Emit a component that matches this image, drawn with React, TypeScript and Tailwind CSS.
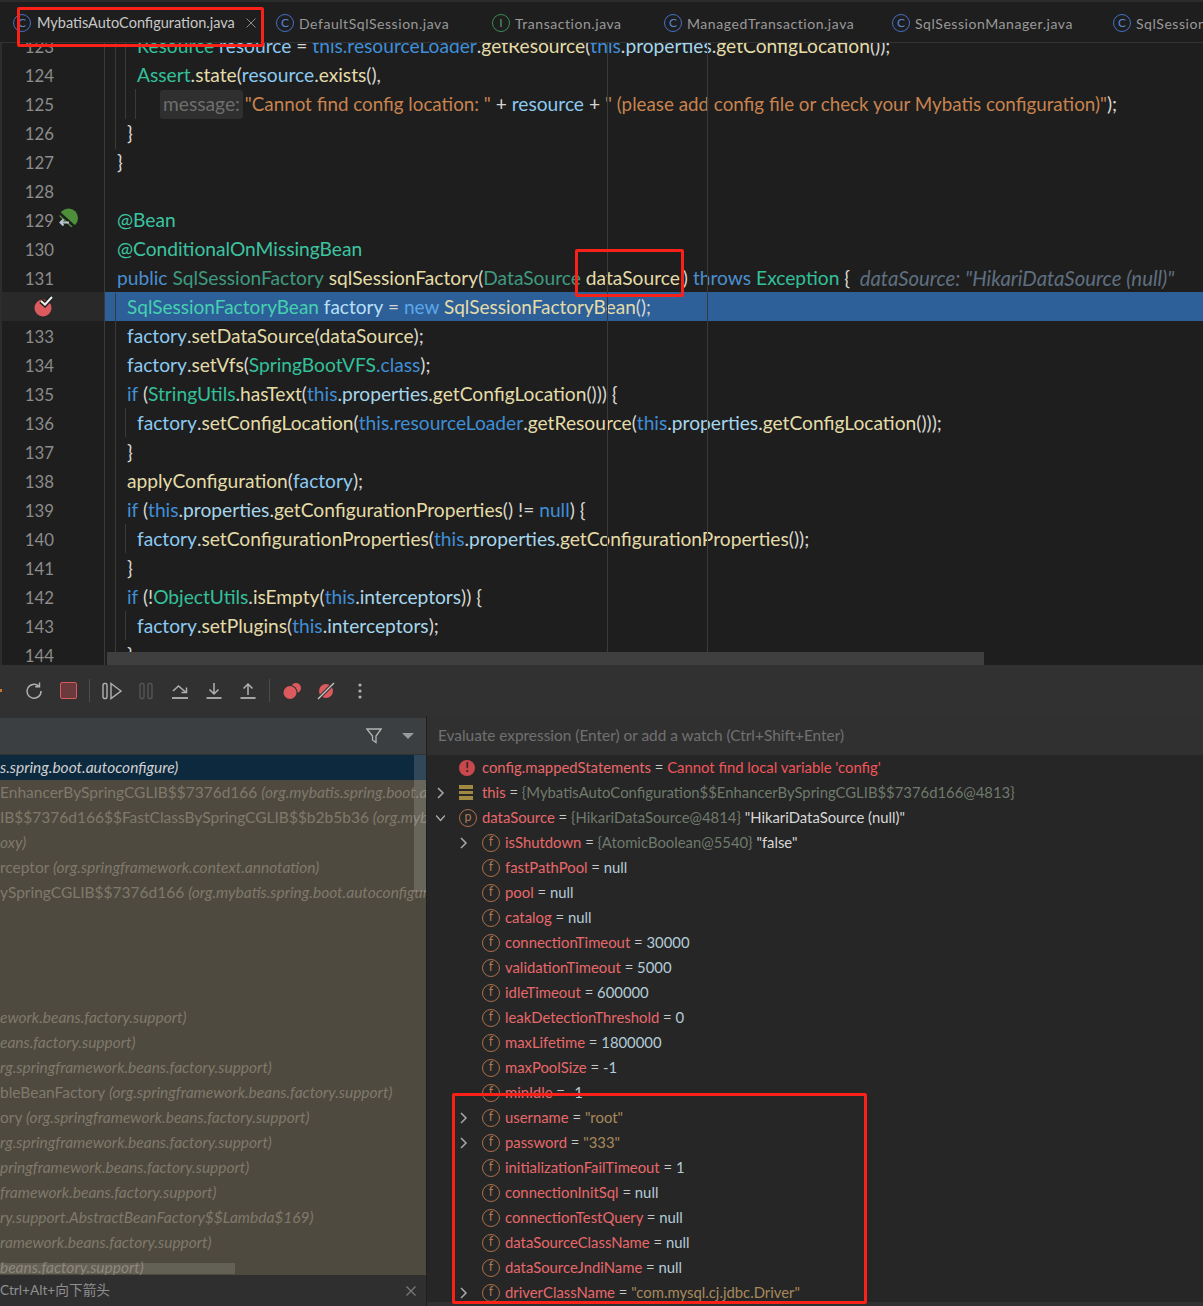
import type { ReactNode } from "react";

const font = "font-['Lato','Noto_Sans_CJK_SC',sans-serif]";

const c = {
  type: "text-[#33c09a]",
  dimType: "text-[#3f9a80]",
  kw: "text-[#3f8fd8]",
  dimKw: "text-[#4a8fd0]",
  ident: "text-[#8ccaf2]",
  prop: "text-[#a6d6ec]",
  method: "text-[#e4dca8]",
  plain: "text-[#d6d6d0]",
  str: "text-[#c8834f] text-[18.8px]",
  ann: "text-[#3cc4a0]",
  hint: "text-[#5f6f80] italic text-[20.4px]",
};

type Part = [string, string];
type Line = { n: number; pad: string; parts: Part[]; pill?: boolean };

const L0 = "pl-[12px]";
const L1 = "pl-[22px]";
const L2 = "pl-[32px]";

const thisProps: Part[] = [["this", c.kw], [".", c.plain], ["properties", c.prop], [".", c.plain]];

const lines: Line[] = [
  { n: 123, pad: L2, parts: [["Resource", c.type], [" resource", c.ident], [" = ", c.plain], ["this", c.kw], [".resourceLoader", c.kw], [".", c.plain], ["getResource", c.method], ["(", c.plain], ...thisProps, ["getConfigLocation", c.method], ["());", c.plain]] },
  { n: 124, pad: L2, parts: [["Assert", c.type], [".", c.plain], ["state", c.method], ["(", c.plain], ["resource", c.ident], [".", c.plain], ["exists", c.method], ["(),", c.plain]] },
  { n: 125, pad: "pl-[57px]", pill: true, parts: [["\"Cannot find config location: \"", c.str], [" + ", c.plain], ["resource", c.ident], [" + ", c.plain], ["\" (please add config file or check your Mybatis configuration)\"", c.str], [");", c.plain]] },
  { n: 126, pad: L1, parts: [["}", c.plain]] },
  { n: 127, pad: L0, parts: [["}", c.plain]] },
  { n: 128, pad: L0, parts: [] },
  { n: 129, pad: L0, parts: [["@Bean", c.ann]] },
  { n: 130, pad: L0, parts: [["@ConditionalOnMissingBean", c.ann]] },
  { n: 131, pad: L0, parts: [["public ", c.dimKw], ["SqlSessionFactory", c.dimType], [" ", c.plain], ["sqlSessionFactory", c.method], ["(", c.plain], ["DataSource", c.dimType], [" ", c.plain], ["dataSource", c.method], [") ", `${c.plain} ml-[3px]`], ["throws ", c.dimKw], ["Exception", c.type], [" {", c.plain], ["  dataSource: \"HikariDataSource (null)\"", c.hint]] },
  { n: 132, pad: L1, parts: [["SqlSessionFactoryBean", "text-[#45d0b0]"], [" factory", "text-[#b8e0f8]"], [" = ", c.plain], ["new ", "text-[#5aa8e8]"], ["SqlSessionFactoryBean", "text-[#e4dca8]"], ["();", c.plain]] },
  { n: 133, pad: L1, parts: [["factory", c.ident], [".", c.plain], ["setDataSource", c.method], ["(", c.plain], ["dataSource", c.method], [");", c.plain]] },
  { n: 134, pad: L1, parts: [["factory", c.ident], [".", c.plain], ["setVfs", c.method], ["(", c.plain], ["SpringBootVFS", c.type], [".class", c.kw], [");", c.plain]] },
  { n: 135, pad: L1, parts: [["if ", c.kw], ["(", c.plain], ["StringUtils", c.type], [".", c.plain], ["hasText", c.method], ["(", c.plain], ...thisProps, ["getConfigLocation", c.method], ["())) {", c.plain]] },
  { n: 136, pad: L2, parts: [["factory", c.ident], [".", c.plain], ["setConfigLocation", c.method], ["(", c.plain], ["this", c.kw], [".resourceLoader", c.kw], [".", c.plain], ["getResource", c.method], ["(", c.plain], ...thisProps, ["getConfigLocation", c.method], ["()));", c.plain]] },
  { n: 137, pad: L1, parts: [["}", c.plain]] },
  { n: 138, pad: L1, parts: [["applyConfiguration", c.method], ["(", c.plain], ["factory", c.ident], [");", c.plain]] },
  { n: 139, pad: L1, parts: [["if ", c.kw], ["(", c.plain], ...thisProps, ["getConfigurationProperties", c.method], ["() != ", c.plain], ["null", c.kw], [") {", c.plain]] },
  { n: 140, pad: L2, parts: [["factory", c.ident], [".", c.plain], ["setConfigurationProperties", c.method], ["(", c.plain], ...thisProps, ["getConfigurationProperties", c.method], ["());", c.plain]] },
  { n: 141, pad: L1, parts: [["}", c.plain]] },
  { n: 142, pad: L1, parts: [["if ", c.kw], ["(!", c.plain], ["ObjectUtils", c.type], [".", c.plain], ["isEmpty", c.method], ["(", c.plain], ["this", c.kw], [".", c.plain], ["interceptors", c.prop], [")) {", c.plain]] },
  { n: 143, pad: L2, parts: [["factory", c.ident], [".", c.plain], ["setPlugins", c.method], ["(", c.plain], ["this", c.kw], [".", c.plain], ["interceptors", c.prop], [");", c.plain]] },
  { n: 144, pad: L1, parts: [["}", c.plain]] },
];

const tabs = [
  { name: "DefaultSqlSession.java", kind: "C", w: "w-[216px]" },
  { name: "Transaction.java", kind: "I", w: "w-[172px]" },
  { name: "ManagedTransaction.java", kind: "C", w: "w-[228px]" },
  { name: "SqlSessionManager.java", kind: "C", w: "w-[221px]" },
  { name: "SqlSessionHolder.java", kind: "C", w: "w-[180px]" },
];

function Glyph({ kind }: { kind: string }) {
  const tone = kind === "I" ? "border-[#3e8a58] text-[#4a9a66]" : "border-[#4570c4] text-[#5a84d4]";
  return (
    <span className={`flex h-[18px] w-[18px] shrink-0 items-center justify-center rounded-full border-[1.5px] text-[12px] leading-none ${tone}`}>
      {kind}
    </span>
  );
}

function TabBar() {
  return (
    <div className="flex h-[43px] shrink-0 border-b border-[#323232] border-t-2 border-t-[#2b2b2b] bg-[#1e1e1e] pl-[13px]">
      <div className="flex w-[263px] shrink-0 items-center gap-[6px] pt-[2px]">
        <Glyph kind="C" />
        <span className="text-[14.5px] text-[#c8c8c8]">MybatisAutoConfiguration.java</span>
        <svg className="ml-[5px]" width="10" height="10" viewBox="0 0 10 10" stroke="#8a8a8a" strokeWidth="1"><path d="M0.5 0.5l9 9M9.5 0.5l-9 9" /></svg>
      </div>
      {tabs.map((t) => (
        <div key={t.name} className={`flex shrink-0 items-center gap-[5px] pt-[2px] ${t.w}`}>
          <Glyph kind={t.kind} />
          <span className="whitespace-nowrap text-[14px] tracking-[0.55px] text-[#999999]">{t.name}</span>
        </div>
      ))}
    </div>
  );
}

function LeafIcon() {
  return (
    <svg className="ml-[4px] -mt-[7px]" width="21" height="20" viewBox="0 0 21 20">
      <circle cx="10.5" cy="10" r="9.5" fill="#4e8f3a" />
      <path d="M0 7L14 20H0z" fill="#1e1e1e" />
      <path d="M1 4.5L17 19" stroke="#1e1e1e" strokeWidth="2.5" />
      <path d="M11 14.5H2.5M5.5 11.5l-3 3 3 3" fill="none" stroke="#b8c4d0" strokeWidth="2" />
    </svg>
  );
}

function BreakpointIcon() {
  return (
    <svg width="22" height="22" viewBox="0 0 22 22">
      <circle cx="10" cy="13" r="8.5" fill="#dc5a5e" />
      <path d="M8 6l4 3.5L19 2" fill="none" stroke="#1f1f1f" strokeWidth="5" />
      <path d="M8 6l4 3.5L19 2" fill="none" stroke="#f0f0f0" strokeWidth="2" />
    </svg>
  );
}

function CodeLine({ line }: { line: Line }) {
  const current = line.n === 132;
  return (
    <div className="flex h-[29px] shrink-0 items-center">
      <div className={`flex h-full w-[103px] shrink-0 items-center border-r border-[#3a3a3a] pt-[3px] ${current ? "bg-[#292929]" : ""}`}>
        <span className={`w-[52px] text-right text-[16.8px] text-[#8c8c8c] ${current ? "invisible" : ""}`}>{line.n}</span>
        {line.n === 129 && <LeafIcon />}
        {current && <span className="absolute left-[31px] -mt-[5px]"><BreakpointIcon /></span>}
      </div>
      <div className={`flex h-full flex-1 items-center whitespace-pre pt-[2px] ${line.pad} ${current ? "bg-[#2d5f99] text-[19px]" : "text-[19.2px]"}`}>
        {line.pill && <span className="mr-[2px] -ml-[2px] rounded-[3px] bg-[#2f2f2f] px-[3px] text-[#6e6e6e]">message:</span>}
        {line.parts.map(([text, cls], i) => (
          <span key={i} className={cls}>{text}</span>
        ))}
      </div>
    </div>
  );
}

function Editor() {
  return (
    <div className="relative h-[622px] shrink-0 overflow-hidden border-l-2 border-[#2d2d2d] bg-[#1e1e1e]">
      <div className="-mt-[12px] flex flex-col">
        {lines.map((l) => (
          <CodeLine key={l.n} line={l} />
        ))}
      </div>
      {/* margin rulers and indent guides */}
      <div className="absolute left-[605px] top-0 h-full w-px bg-[#3a3a3a]" />
      <div className="absolute left-[705px] top-0 h-full w-px bg-[#3a3a3a]" />
      <div className="absolute left-[113px] top-0 h-[106px] w-px bg-[#3a3a3a]" />
      <div className="absolute left-[113px] top-[250px] h-[372px] w-px bg-[#3a3a3a]" />
      <div className="absolute left-[123px] top-0 h-[76px] w-px bg-[#3a3a3a]" />
      <div className="absolute left-[133px] top-[46px] h-[30px] w-px bg-[#3a3a3a]" />
      <div className="absolute left-[123px] top-[365px] h-[29px] w-px bg-[#3a3a3a]" />
      <div className="absolute left-[123px] top-[481px] h-[29px] w-px bg-[#3a3a3a]" />
      <div className="absolute left-[123px] top-[568px] h-[29px] w-px bg-[#3a3a3a]" />
      <div className="absolute bottom-0 left-[105px] h-[13px] w-[877px] bg-[#3f3f3f]" />
    </div>
  );
}

function ToolCell({ children }: { children: ReactNode }) {
  return <div className="flex h-[34px] w-[34px] items-center justify-center">{children}</div>;
}

function ToolSep() {
  return <div className="ml-[4px] mr-[5px] h-[23px] w-px bg-[#4c4c4c]" />;
}

function DebugToolbar() {
  const gray = "#afb1b3";
  return (
    <div className="flex h-[51px] shrink-0 items-center bg-[#313131] pl-[14px]">
      <div className="absolute left-0 h-[3px] w-[2px] bg-[#c8762c]" />
      <div className="w-[3px]" />
      <ToolCell>
        <svg width="18" height="18" viewBox="0 0 18 18" fill="none" stroke={gray} strokeWidth="1.5">
          <path d="M13.8 4.2A7 7 0 1 0 16 9" />
          <path d="M14.5 0.5v4.3h-4.3" />
        </svg>
      </ToolCell>
      <ToolCell>
        <div className="h-[17px] w-[17px] rounded-[2px] border-[1.5px] border-[#d9595e] bg-[#6a3a3c]" />
      </ToolCell>
      <ToolSep />
      <ToolCell>
        <svg width="20" height="18" viewBox="0 0 20 18" fill="none" stroke={gray} strokeWidth="1.4">
          <rect x="1" y="1.5" width="4" height="15" rx="1.5" />
          <path d="M9 1.5L19 9 9 16.5z" />
        </svg>
      </ToolCell>
      <ToolCell>
        <svg width="14" height="18" viewBox="0 0 14 18" fill="none" stroke="#555555" strokeWidth="1.4">
          <rect x="1" y="1.5" width="4" height="15" rx="1.5" />
          <rect x="9" y="1.5" width="4" height="15" rx="1.5" />
        </svg>
      </ToolCell>
      <ToolCell>
        <svg width="18" height="18" viewBox="0 0 18 18" fill="none" stroke={gray} strokeWidth="1.5">
          <path d="M2 9l5.5-5 7 6" />
          <path d="M15.5 5.5v5h-5" />
          <path d="M1 16h16" strokeWidth="1.8" />
        </svg>
      </ToolCell>
      <ToolCell>
        <svg width="16" height="18" viewBox="0 0 16 18" fill="none" stroke={gray} strokeWidth="1.5">
          <path d="M8 1v10M3.5 7.5L8 12l4.5-4.5" />
          <path d="M0.5 16h15" strokeWidth="1.8" />
        </svg>
      </ToolCell>
      <ToolCell>
        <svg width="16" height="18" viewBox="0 0 16 18" fill="none" stroke={gray} strokeWidth="1.5">
          <path d="M8 13V2.5M3.5 6.5L8 2l4.5 4.5" />
          <path d="M0.5 16h15" strokeWidth="1.8" />
        </svg>
      </ToolCell>
      <ToolSep />
      <ToolCell>
        <svg width="20" height="18" viewBox="0 0 20 18">
          <circle cx="14" cy="6" r="5" fill="#dc5a5e" />
          <circle cx="8" cy="10.5" r="7.5" fill="#313131" />
          <circle cx="8" cy="10.5" r="6.5" fill="#dc5a5e" />
        </svg>
      </ToolCell>
      <ToolCell>
        <svg width="18" height="18" viewBox="0 0 18 18">
          <circle cx="9" cy="9" r="7" fill="#dc5a5e" />
          <path d="M1 17L17 1" stroke="#313131" strokeWidth="3.5" />
          <path d="M1 17L17 1" stroke="#c8c8c8" strokeWidth="1.3" />
        </svg>
      </ToolCell>
      <ToolCell>
        <svg width="4" height="16" viewBox="0 0 4 16" fill={gray}>
          <circle cx="2" cy="2" r="1.6" />
          <circle cx="2" cy="8" r="1.6" />
          <circle cx="2" cy="14" r="1.6" />
        </svg>
      </ToolCell>
    </div>
  );
}

const frames: [string, string][] = [
  ["EnhancerBySpringCGLIB$$7376d166 ", "(org.mybatis.spring.boot.autoconfigure)"],
  ["IB$$7376d166$$FastClassBySpringCGLIB$$b2b5b36 ", "(org.mybatis.spring.boot)"],
  ["", "oxy)"],
  ["rceptor ", "(org.springframework.context.annotation)"],
  ["ySpringCGLIB$$7376d166 ", "(org.mybatis.spring.boot.autoconfigure)"],
  ["", ""],
  ["", ""],
  ["", ""],
  ["", ""],
  ["", "ework.beans.factory.support)"],
  ["", "eans.factory.support)"],
  ["", "rg.springframework.beans.factory.support)"],
  ["bleBeanFactory ", "(org.springframework.beans.factory.support)"],
  ["ory ", "(org.springframework.beans.factory.support)"],
  ["", "rg.springframework.beans.factory.support)"],
  ["", "pringframework.beans.factory.support)"],
  ["", "framework.beans.factory.support)"],
  ["", "ry.support.AbstractBeanFactory$$Lambda$169)"],
  ["", "ramework.beans.factory.support)"],
  ["", "beans.factory.support)"],
];

function FramesPanel() {
  return (
    <div className="flex w-[426px] shrink-0 flex-col">
      <div className="h-[2px] bg-[#313131]" />
      <div className="flex h-[37px] shrink-0 items-center justify-end gap-[20px] border-b border-[#323232] bg-[#3c3f41] pr-[12px]">
        <svg width="16" height="16" viewBox="0 0 16 16" fill="none" stroke="#b4b4b4" strokeWidth="1.3"><path d="M0.8 1h14.4L10 8v6.5L6.5 12V8z" /></svg>
        <svg width="12" height="6" viewBox="0 0 12 6" fill="#9a9a9a"><path d="M0 0h12L6 6z" /></svg>
      </div>
      <div className="relative flex h-[520px] shrink-0 flex-col overflow-hidden bg-[#4e4a3f]">
        <div className="flex h-[25px] shrink-0 items-center whitespace-nowrap bg-[#0d293e] text-[15.5px] italic text-[#d0d0d0]">s.spring.boot.autoconfigure)</div>
        {frames.map(([method, pkg], i) => (
          <div key={i} className="flex h-[25px] shrink-0 items-center whitespace-pre text-[15.5px] text-[#80796b]">
            <span>{method}</span>
            <span className="italic">{pkg}</span>
          </div>
        ))}
        <div className="absolute right-0 top-0 h-[137px] w-[12px] bg-white/15" />
        <div className="absolute bottom-px left-0 h-[11px] w-[235px] bg-white/12" />
      </div>
      <div className="flex flex-1 items-center justify-between bg-[#2f2f2f] pr-[10px] text-[13.7px] text-[#8f8f8f]">
        <span>Ctrl+Alt+向下箭头</span>
        <svg width="10" height="10" viewBox="0 0 10 10" stroke="#7a7a7a" strokeWidth="1.2"><path d="M0.5 0.5l9 9M9.5 0.5l-9 9" /></svg>
      </div>
    </div>
  );
}

type Var = { name: string; value: ReactNode; arrow?: "right" | "down"; level: 0 | 1; icon?: "f" | "p" | "err" | "list" };

const Null = () => <span className="text-[#b4ccd8]">null</span>;
const Num = ({ v }: { v: string }) => <span className="text-[#b4ccd8]">{v}</span>;
const Str = ({ v }: { v: string }) => <span className="text-[#a8895c]">{v}</span>;
const Obj = ({ v }: { v: string }) => <span className="text-[#6f7a6c]">{v}</span>;

const vars: Var[] = [
  { name: "config.mappedStatements", level: 0, icon: "err", value: <span className="text-[#f0555a]">Cannot find local variable 'config'</span> },
  { name: "this", level: 0, icon: "list", arrow: "right", value: <Obj v="{MybatisAutoConfiguration$$EnhancerBySpringCGLIB$$7376d166@4813}" /> },
  { name: "dataSource", level: 0, icon: "p", arrow: "down", value: <><Obj v="{HikariDataSource@4814}" /> <span className="text-[#d8d8d8]">"HikariDataSource (null)"</span></> },
  { name: "isShutdown", level: 1, icon: "f", arrow: "right", value: <><Obj v="{AtomicBoolean@5540}" /> <span className="text-[#d8d8d8]">"false"</span></> },
  { name: "fastPathPool", level: 1, icon: "f", value: <Null /> },
  { name: "pool", level: 1, icon: "f", value: <Null /> },
  { name: "catalog", level: 1, icon: "f", value: <Null /> },
  { name: "connectionTimeout", level: 1, icon: "f", value: <Num v="30000" /> },
  { name: "validationTimeout", level: 1, icon: "f", value: <Num v="5000" /> },
  { name: "idleTimeout", level: 1, icon: "f", value: <Num v="600000" /> },
  { name: "leakDetectionThreshold", level: 1, icon: "f", value: <Num v="0" /> },
  { name: "maxLifetime", level: 1, icon: "f", value: <Num v="1800000" /> },
  { name: "maxPoolSize", level: 1, icon: "f", value: <Num v="-1" /> },
  { name: "minIdle", level: 1, icon: "f", value: <Num v="-1" /> },
  { name: "username", level: 1, icon: "f", arrow: "right", value: <Str v={'"root"'} /> },
  { name: "password", level: 1, icon: "f", arrow: "right", value: <Str v={'"333"'} /> },
  { name: "initializationFailTimeout", level: 1, icon: "f", value: <Num v="1" /> },
  { name: "connectionInitSql", level: 1, icon: "f", value: <Null /> },
  { name: "connectionTestQuery", level: 1, icon: "f", value: <Null /> },
  { name: "dataSourceClassName", level: 1, icon: "f", value: <Null /> },
  { name: "dataSourceJndiName", level: 1, icon: "f", value: <Null /> },
  { name: "driverClassName", level: 1, icon: "f", arrow: "right", value: <Str v={'"com.mysql.cj.jdbc.Driver"'} /> },
];

function Arrow({ dir }: { dir?: "right" | "down" }) {
  if (!dir) return <span className="w-[9px]" />;
  return (
    <svg width="9" height="12" viewBox="0 0 9 12" fill="none" stroke="#a8a8a8" strokeWidth="1.5">
      {dir === "right" ? <path d="M2 1l5 5-5 5" /> : <path d="M0 3.5l4.5 5 4.5-5" />}
    </svg>
  );
}

function VarIcon({ icon }: { icon?: Var["icon"] }) {
  if (icon === "err") {
    return (
      <span className="flex h-[16px] w-[16px] items-center justify-center rounded-full bg-[#c8484c] text-[13px] font-bold leading-none text-[#262626]">!</span>
    );
  }
  if (icon === "list") {
    return (
      <span className="flex h-[15px] w-[14px] flex-col justify-between">
        <span className="h-[4px] bg-[#a08a42]" />
        <span className="h-[3px] bg-[#a08a42]" />
        <span className="h-[4px] bg-[#a08a42]" />
      </span>
    );
  }
  return (
    <span className="flex h-[18px] w-[18px] items-center justify-center rounded-full border-[1.5px] border-[#a8704c] text-[12.5px] leading-none text-[#b07a55]">
      {icon}
    </span>
  );
}

function VarRow({ v }: { v: Var }) {
  return (
    <div className={`flex h-[25px] shrink-0 items-center whitespace-pre text-[14.85px] ${v.level === 1 ? "pl-[32px]" : "pl-[9px]"}`}>
      <span className="flex w-[23px] shrink-0 items-center"><Arrow dir={v.arrow} /></span>
      <span className="flex w-[23px] shrink-0 items-center"><VarIcon icon={v.icon} /></span>
      <span>
        <span className="text-[#e8686a]">{v.name}</span>
        <span className="text-[#c8c8c8]"> = </span>
        {v.value}
      </span>
    </div>
  );
}

function VariablesPanel() {
  return (
    <div className="relative flex min-w-0 flex-1 flex-col border-l border-[#1f1f1f] bg-[#262626]">
      <div className="flex h-[39px] shrink-0 items-center bg-[#303030] pl-[11px] text-[15.4px] text-[#707070]">
        Evaluate expression (Enter) or add a watch (Ctrl+Shift+Enter)
      </div>
      <div className="flex flex-col">
        {vars.map((v) => (
          <VarRow key={v.name} v={v} />
        ))}
      </div>
      <div className="absolute bottom-0 left-0 h-[4px] w-full bg-[#303030]" />
    </div>
  );
}

function Callout({ cls }: { cls: string }) {
  return <div className={`absolute rounded-[2px] border-[3px] border-[#fa2118] ${cls}`} />;
}

export default function App() {
  return (
    <div className={`relative flex h-[1306px] w-[1203px] flex-col overflow-hidden bg-[#262626] ${font}`}>
      <TabBar />
      <Editor />
      <DebugToolbar />
      <div className="flex min-h-0 flex-1">
        <FramesPanel />
        <VariablesPanel />
      </div>
      <Callout cls="left-[17px] top-[7px] h-[40px] w-[247px]" />
      <Callout cls="left-[575px] top-[249px] h-[48px] w-[109px]" />
      <Callout cls="left-[452px] top-[1093px] h-[211px] w-[415px]" />
    </div>
  );
}
